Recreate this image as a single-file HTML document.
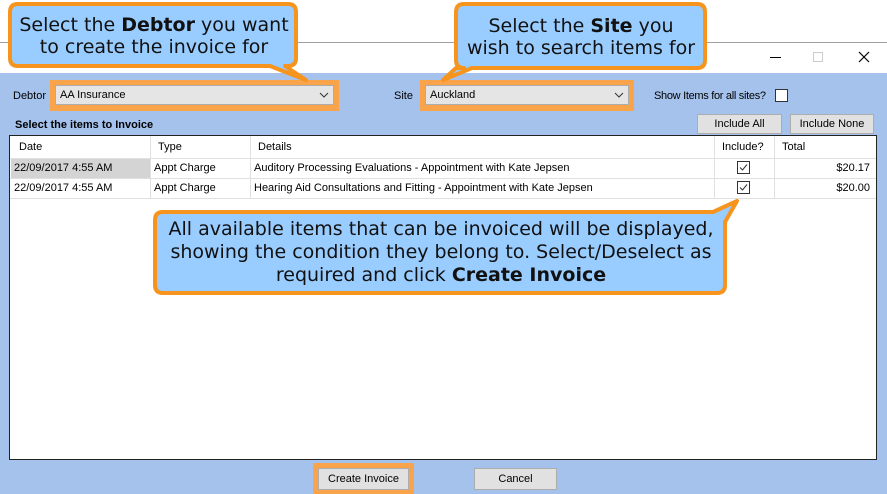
<!DOCTYPE html>
<html><head><meta charset="utf-8"><style>
*{margin:0;padding:0;box-sizing:border-box}
body{width:887px;height:494px;position:relative;overflow:hidden;background:#fff;font-family:"Liberation Sans",sans-serif;font-size:11px;color:#000}
.abs{position:absolute}
.blue{background:#a4c2ec}
.combo{position:absolute;background:#e5e5e5;border:1px solid #adadad;height:20px;line-height:18px;padding:0 4px;font-size:11px}
.hl{position:absolute;background:#f9a34a}
.btn{position:absolute;background:#e1e1e1;border:1px solid #adadad;text-align:center;font-size:11px;line-height:18px}
.cell{position:absolute;font-size:11px;line-height:20px;padding-left:4px;white-space:nowrap}
.vl{position:absolute;width:1px;background:#e0e0e0}
.hl2{position:absolute;height:1px;background:#e0e0e0}
.cb{position:absolute;width:13px;height:13px;border:1px solid #333;background:#fff}
.ct{position:absolute;font-family:"DejaVu Sans",sans-serif;font-size:19px;text-align:center;line-height:22px;color:#111;white-space:nowrap}
</style></head><body>
<div class="abs" style="left:0;top:42px;width:887px;height:1px;background:#a0a0a0"></div>
<div class="abs" style="left:770px;top:57px;width:11px;height:1px;background:#000"></div>
<div class="abs" style="left:813px;top:52px;width:10px;height:10px;border:1px solid #ccc"></div>
<svg class="abs" style="left:858px;top:51px" width="12" height="12"><path d="M1 1L11 11M11 1L1 11" stroke="#000" stroke-width="1.2"/></svg>
<div class="abs blue" style="left:0;top:73px;width:887px;height:421px"></div>
<div class="abs" style="left:13px;top:90px">Debtor</div>
<div class="hl" style="left:50px;top:80px;width:289px;height:31px"></div>
<div class="combo" style="left:55px;top:85px;width:279px">AA Insurance</div>
<svg class="abs" style="left:319px;top:92px" width="10" height="6"><path d="M1 1L5 5L9 1" stroke="#333" fill="none"/></svg>
<div class="abs" style="left:394px;top:90px">Site</div>
<div class="hl" style="left:420px;top:80px;width:214px;height:31px"></div>
<div class="combo" style="left:425px;top:85px;width:204px">Auckland</div>
<svg class="abs" style="left:614px;top:92px" width="10" height="6"><path d="M1 1L5 5L9 1" stroke="#333" fill="none"/></svg>
<div class="abs" style="left:654px;top:90px;letter-spacing:-0.3px">Show Items for all sites?</div>
<div class="cb" style="left:775px;top:89px"></div>
<div class="abs" style="left:15px;top:119px;font-weight:bold">Select the items to Invoice</div>
<div class="btn" style="left:697px;top:114px;width:85px;height:20px">Include All</div>
<div class="btn" style="left:790px;top:114px;width:84px;height:20px">Include None</div>
<div class="abs" style="left:9px;top:135px;width:868px;height:325px;background:#fff;border:1px solid #222"></div>
<div class="abs" style="left:11px;top:158px;width:139px;height:20px;background:#d4d4d4"></div>
<div class="hl2" style="left:10px;top:158px;width:866px"></div>
<div class="hl2" style="left:10px;top:178px;width:866px"></div>
<div class="hl2" style="left:10px;top:198px;width:866px"></div>
<div class="vl" style="left:150px;top:136px;height:62px"></div>
<div class="vl" style="left:250px;top:136px;height:62px"></div>
<div class="vl" style="left:714px;top:136px;height:62px"></div>
<div class="vl" style="left:774px;top:136px;height:62px"></div>
<div class="cell" style="left:15px;top:137px">Date</div>
<div class="cell" style="left:154px;top:137px">Type</div>
<div class="cell" style="left:254px;top:137px">Details</div>
<div class="cell" style="left:718px;top:137px">Include?</div>
<div class="cell" style="left:778px;top:137px">Total</div>
<div class="cell" style="left:10px;top:158px">22/09/2017 4:55 AM</div>
<div class="cell" style="left:150px;top:158px">Appt Charge</div>
<div class="cell" style="left:250px;top:158px">Auditory Processing Evaluations - Appointment with Kate Jepsen</div>
<div class="cell" style="left:10px;top:178px">22/09/2017 4:55 AM</div>
<div class="cell" style="left:150px;top:178px">Appt Charge</div>
<div class="cell" style="left:250px;top:178px">Hearing Aid Consultations and Fitting - Appointment with Kate Jepsen</div>
<div class="cell" style="left:810px;top:158px;width:60px;text-align:right">$20.17</div>
<div class="cell" style="left:810px;top:178px;width:60px;text-align:right">$20.00</div>
<svg class="abs" style="left:737px;top:161px" width="14" height="34"><rect x="0.5" y="0.5" width="12" height="12" fill="#fff" stroke="#333"/><path d="M3 6.5L5.5 9L10 3.5" stroke="#333" fill="none"/><rect x="0.5" y="20.5" width="12" height="12" fill="#fff" stroke="#333"/><path d="M3 26.5L5.5 29L10 23.5" stroke="#333" fill="none"/></svg>
<div class="hl" style="left:313px;top:463px;width:101px;height:31px"></div>
<div class="btn" style="left:318px;top:468px;width:91px;height:22px;line-height:20px">Create Invoice</div>
<div class="btn" style="left:474px;top:468px;width:83px;height:22px;line-height:20px">Cancel</div>
<svg class="abs" style="left:0;top:0" width="887" height="494">
<g fill="#99ccff" stroke="#f7941d" stroke-width="4" stroke-linejoin="round">
<path d="M18 4H288Q296 4 296 12V58Q296 66 288 66H285L306 80L270 66H18Q10 66 10 58V12Q10 4 18 4Z"/>
<path d="M464 4H697Q705 4 705 12V60Q705 68 697 68H472L443 80L456 68H464Q456 68 456 60V12Q456 4 464 4Z"/>
<path d="M163 212H713L737 201L725 222V285Q725 293 717 293H163Q155 293 155 285V220Q155 212 163 212Z"/>
</g></svg>
<div class="ct" style="left:10px;top:14px;width:288px">Select the <b>Debtor</b> you want<br>to create the invoice for</div>
<div class="ct" style="left:456px;top:15px;width:250px">Select the <b>Site</b> you<br>wish to search items for</div>
<div class="ct" style="left:155px;top:218px;width:572px;line-height:23px">All available items that can be invoiced will be displayed,<br>showing the condition they belong to. Select/Deselect as<br>required and click <b>Create Invoice</b></div>
</body></html>
